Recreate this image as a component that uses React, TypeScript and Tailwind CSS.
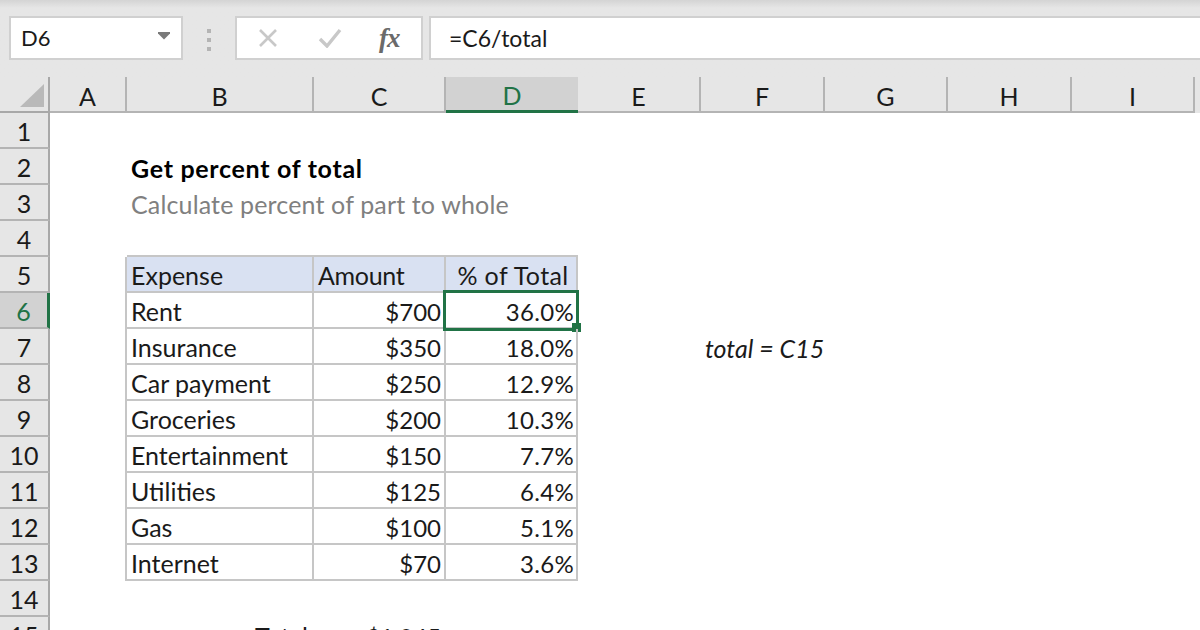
const columns = ['A', 'B', 'C', 'D', 'E', 'F', 'G', 'H', 'I'];

const expenses = [
  ['Rent', '$700', '36.0%'],
  ['Insurance', '$350', '18.0%'],
  ['Car payment', '$250', '12.9%'],
  ['Groceries', '$200', '10.3%'],
  ['Entertainment', '$150', '7.7%'],
  ['Utilities', '$125', '6.4%'],
  ['Gas', '$100', '5.1%'],
  ['Internet', '$70', '3.6%'],
];

const gridCols = 'grid grid-cols-[50px_77px_187px_132px_132px_123px_124px_123px_124px_123px_5px]';

function FormulaBar() {
  return (
    <div className="flex h-[77px] items-start bg-[#e6e6e6] bg-gradient-to-b from-[#d4d4d4] to-[#e6e6e6] to-[8px] pt-4 pl-[9px]">
      <div className="flex h-11 w-[174px] items-center justify-between border-2 border-[#d0d0d0] bg-white pr-[11px] pl-[10px] text-[22px]">
        <span>D6</span>
        <svg width="12" height="8" viewBox="0 0 12 8" className="mb-1">
          <path d="M0 0h12v1.5L6 7.5 0 1.5z" fill="#7a7a7a" />
        </svg>
      </div>
      <div className="flex w-[52px] flex-col items-center gap-[5px] pt-[13px]">
        <span className="size-[4px] bg-[#b4b4b4]" />
        <span className="size-[4px] bg-[#b4b4b4]" />
        <span className="size-[4px] bg-[#b4b4b4]" />
      </div>
      <div className="flex h-11 w-[188px] items-center border-2 border-[#d0d0d0] bg-white pl-[21px]">
        <svg width="20" height="20" viewBox="0 0 20 20" className="shrink-0">
          <path d="M2 2l16 16M18 2L2 18" stroke="#c8c8c8" strokeWidth="2.6" fill="none" />
        </svg>
        <svg width="24" height="20" viewBox="0 0 24 20" className="ml-[40px] shrink-0">
          <path d="M2 11l7 7L22 2" stroke="#c8c8c8" strokeWidth="3.4" fill="none" />
        </svg>
        <span className="ml-[37px] font-['Liberation_Serif',serif] text-[27px] font-bold tracking-[-1px] text-[#6a6a6a] italic">
          fx
        </span>
      </div>
      <div className="ml-[6px] flex h-11 flex-1 items-center border-y-2 border-l-2 border-[#d0d0d0] bg-white pl-[18px] text-[23px]">
        =C6/total
      </div>
    </div>
  );
}

function ColumnHeader() {
  return (
    <div className={`${gridCols} h-[36px] bg-[#e6e6e6]`}>
      <div className="relative border-r-2 border-b-2 border-[#a8a8a8]">
        <svg width="24" height="23" viewBox="0 0 24 23" className="absolute top-[7px] left-[20px]">
          <path d="M24 0v23H0z" fill="#b9b9b9" />
        </svg>
      </div>
      {columns.map((c) =>
        c === 'D' ? (
          <div
            key={c}
            className="flex items-center justify-center border-b-[3px] border-[#217346] bg-[#d2d2d2] pt-[4px] text-[#217346]"
          >
            {c}
          </div>
        ) : (
          <div key={c} className="flex items-center justify-center border-r-2 border-b-2 border-[#b4b4b4] pt-[4px]">
            {c}
          </div>
        ),
      )}
    </div>
  );
}

function RowNumber({ n, active }: { n: number; active?: boolean }) {
  return (
    <div
      className={
        active
          ? 'flex h-9 items-center justify-center border-r-[3px] border-b-2 border-r-[#217346] border-b-[#b4b4b4] bg-[#d2d2d2] pt-[3px] text-[#217346]'
          : 'flex h-9 items-center justify-center border-r-2 border-b-2 border-r-[#a8a8a8] border-b-[#b4b4b4] bg-[#e6e6e6] pt-[3px]'
      }
    >
      {n}
    </div>
  );
}

function Row({ n, children, active }: { n: number; children?: React.ReactNode; active?: boolean }) {
  return (
    <div className={`${gridCols} h-9`}>
      <RowNumber n={n} active={active} />
      {children}
    </div>
  );
}

const cell = 'flex h-9 items-center border-r-2 border-b-2 border-[#c6c6c6] pt-[3px] pl-[4px] whitespace-nowrap';
const amountCell = 'flex h-9 items-center justify-end border-r-2 border-b-2 border-[#c6c6c6] pt-[4px] pr-[3px] text-[24px] whitespace-nowrap';
const percentCell = 'relative flex h-9 items-center justify-end border-r-2 border-b-2 border-[#c6c6c6] pt-[4px] pr-[2px] text-[24px] tracking-[0.3px] whitespace-nowrap';
const headFill = 'bg-[#d9e1f2]';

export default function App() {
  return (
    <div className="h-[630px] w-[1200px] overflow-hidden bg-white font-['Lato',sans-serif] text-[25px] leading-none text-[#1a1a1a]">
      <FormulaBar />
      <ColumnHeader />

      <Row n={1} />
      <Row n={2}>
        <div />
        <div className="flex h-9 items-center pt-[3px] pl-[4px] font-bold tracking-[0.7px] whitespace-nowrap text-black">
          Get percent of total
        </div>
      </Row>
      <Row n={3}>
        <div />
        <div className="flex h-9 items-center pt-[3px] pl-[4px] tracking-[0.15px] whitespace-nowrap text-[#808080]">
          Calculate percent of part to whole
        </div>
      </Row>
      <Row n={4}>
        <div />
        <div className="border-b-2 border-[#c6c6c6]" />
        <div className="border-b-2 border-[#c6c6c6]" />
        <div className="border-b-2 border-[#c6c6c6]" />
      </Row>
      <Row n={5}>
        <div className="border-r-2 border-[#c6c6c6]" />
        <div className={`${cell} ${headFill}`}>Expense</div>
        <div className={`${cell} ${headFill} tracking-[-0.3px]`}>Amount</div>
        <div className={`${cell} ${headFill} justify-center tracking-[0.4px]`}>% of Total</div>
      </Row>

      {expenses.map(([name, amount, pct], i) => (
        <Row key={name} n={i + 6} active={i === 0}>
          <div className="border-r-2 border-[#c6c6c6]" />
          <div className={cell}>{name}</div>
          <div className={amountCell}>{amount}</div>
          <div className={percentCell}>
            {pct}
            {i === 0 && (
              <>
                <span className="absolute -top-[3px] -right-[3px] -bottom-[4px] -left-[3px] border-[3px] border-[#217346]" />
                <span className="absolute -right-[5px] -bottom-[5px] size-[9px] bg-[#217346]" />
              </>
            )}
          </div>
          {i === 1 && (
            <>
              <div />
              <div className="flex h-9 items-center pt-[3px] pl-[4px] whitespace-nowrap italic">total = C15</div>
            </>
          )}
        </Row>
      ))}

      <Row n={14} />
      <Row n={15}>
        <div />
        <div className="flex h-9 items-center justify-end pt-[3px] pr-[6px]">Total</div>
        <div className="flex h-9 items-center justify-end pt-[4px] pr-[5px] text-[24px]">$1,945</div>
      </Row>
    </div>
  );
}
